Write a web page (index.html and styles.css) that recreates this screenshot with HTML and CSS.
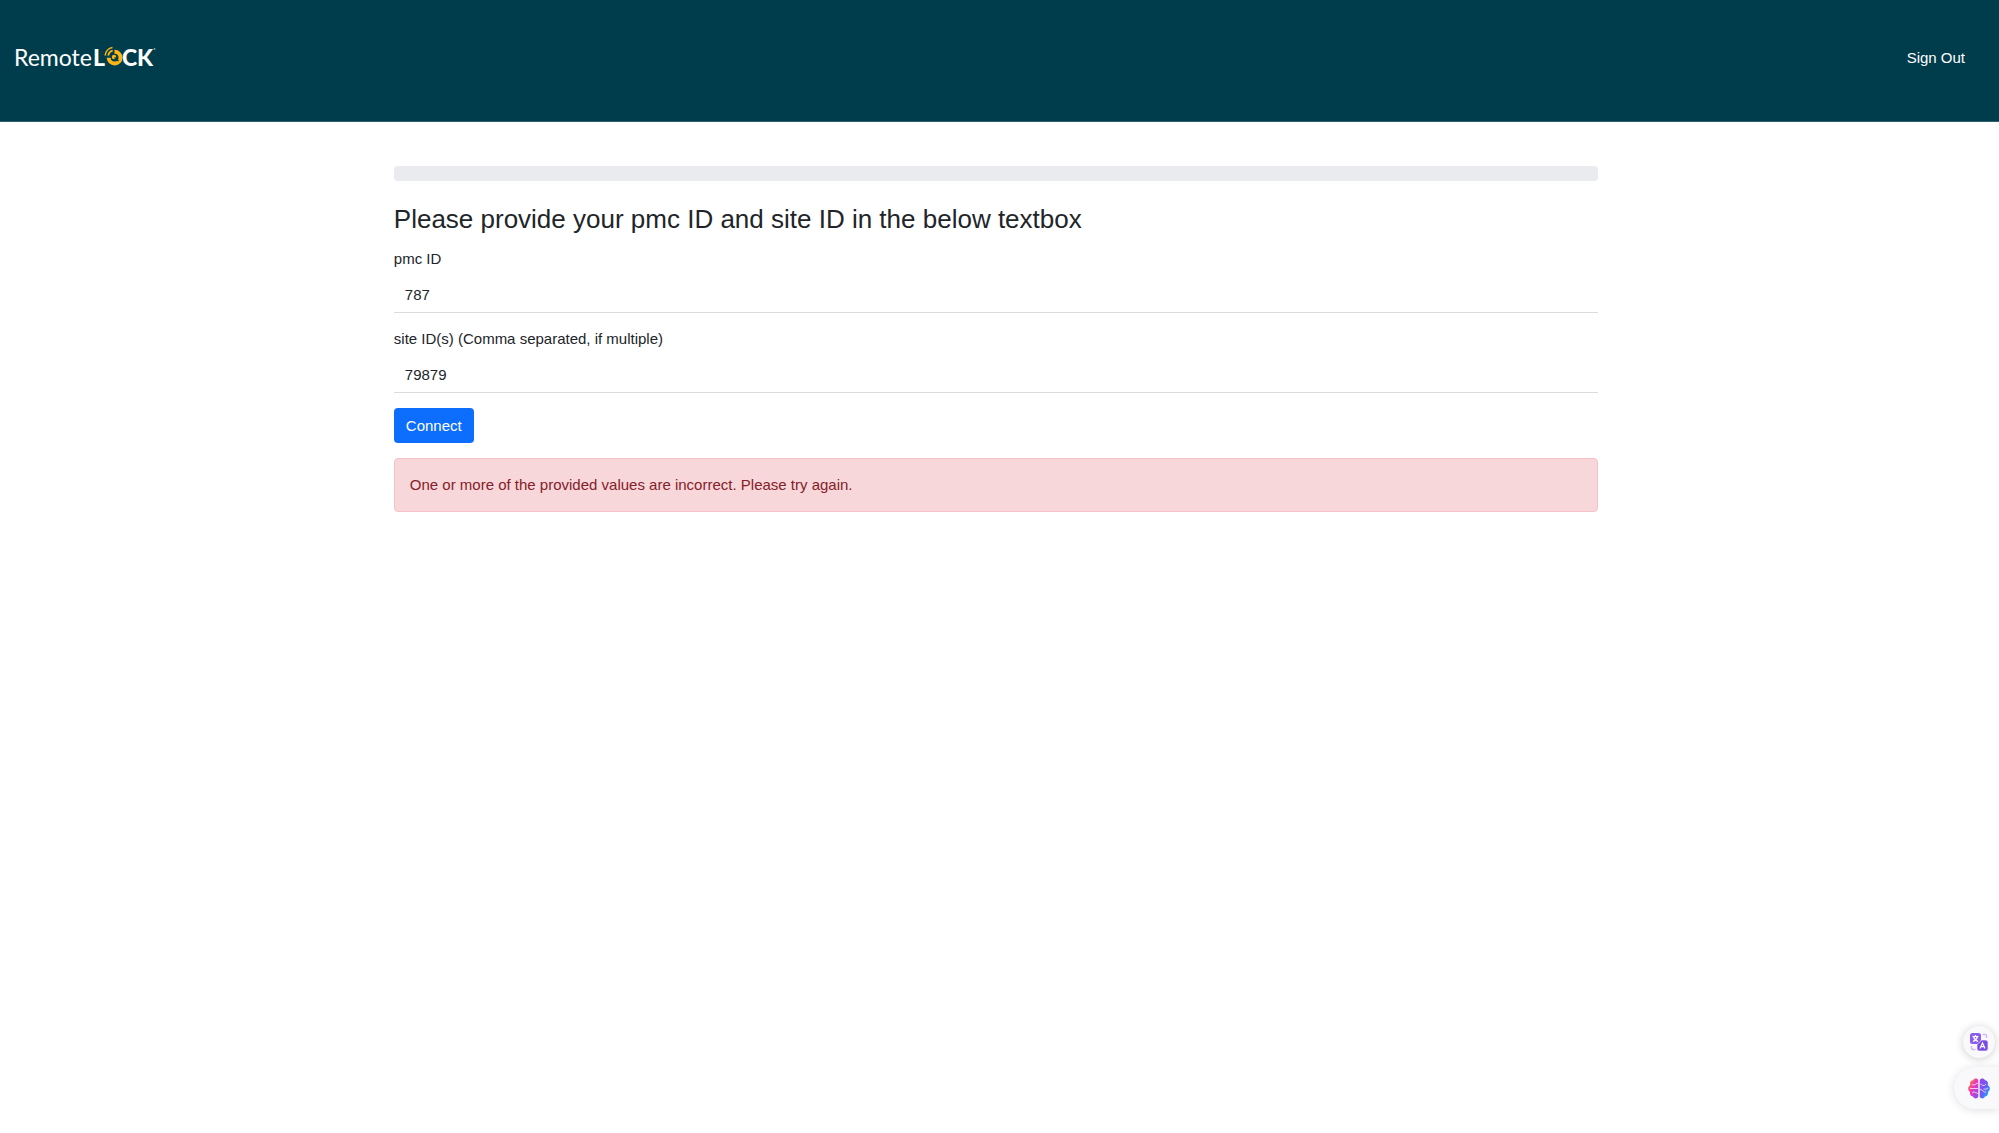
FILE: index.html
```html
<!DOCTYPE html>
<html lang="en">
<head>
<meta charset="utf-8">
<title>RemoteLock</title>
<link rel="stylesheet" href="styles.css">
</head>
<body>
<header class="topbar">
  <a class="logo" href="#">
    <span class="logo-light">Remote</span>
    <span class="logo-bold">L</span>
    <svg class="logo-ring" viewBox="0 0 19 20" width="19" height="20" aria-hidden="true">
      <path d="M10.500 5.700A5.900 5.900 0 1 1 4.700 11.800" fill="none" stroke="#fdb515" stroke-width="4"/>
      <path d="M1.200 9.500A8.800 8.800 0 0 1 8.500 1.500M4.300 9.600A5.800 5.800 0 0 1 8.700 4.700" fill="none" stroke="#fdb515" stroke-width="1.700"/>
      <circle cx="10" cy="11" r="2.200" fill="#fdb515"/>
      <path d="M10.500 11.500L14.500 15" stroke="#003d4c" stroke-width="1.300"/>
    </svg>
    <span class="logo-bold">CK</span>
    <svg class="logo-mark" viewBox="0 0 3 3" width="3" height="3" aria-hidden="true"><circle cx="1.500" cy="1" r="1" fill="#7f9ea6"/></svg>
  </a>
  <a class="signout" href="#">Sign Out</a>
</header>
<main class="content">
  <div class="progress" role="progressbar" aria-label="Setup progress" aria-valuenow="0" aria-valuemin="0" aria-valuemax="100"></div>
  <h1 class="title">Please provide your pmc ID and site ID in the below textbox</h1>
  <form class="form">
    <div class="field">
      <label for="pmc">pmc ID</label>
      <input id="pmc" type="text" value="787">
    </div>
    <div class="field">
      <label for="site">site ID(s) (Comma separated, if multiple)</label>
      <input id="site" type="text" value="79879">
    </div>
    <button class="connect" type="button">Connect</button>
    <div class="alert" role="alert">One or more of the provided values are incorrect. Please try again.</div>
  </form>
</main>
<aside class="widgets">
  <button class="widget-round" type="button" aria-label="Translate">
    <svg viewBox="0 0 18 18" width="18" height="18" aria-hidden="true">
      <rect x="0" y="0" width="11" height="11" rx="2.500" fill="#8b5cf0"/>
      <path d="M7 11.500L11 8V7h4.500A2.500 2.500 0 0 1 18 9.500v6A2.500 2.500 0 0 1 15.500 18h-6A2.500 2.500 0 0 1 7 15.500z" fill="#7c4be0" stroke="#f9f9fb" stroke-width=".6"/>
      <path d="M2.500 3.500h6M5.500 2v1.500M3.500 3.500q1 3.500 4.500 5M7.500 3.500q-1 3.500-4.500 5" fill="none" stroke="#fff" stroke-width="1.200"/>
      <path d="M10 15.500l2.500-5.500 2.500 5.500M11 13.700h3" fill="none" stroke="#fff" stroke-width="1.200"/>
      <path d="M12.500 1.500H15A1.500 1.500 0 0 1 16.500 3v2M1.500 13v2A1.500 1.500 0 0 0 3 16.500h2.500" fill="none" stroke="#cdb8f8" stroke-width="1.400"/>
    </svg>
  </button>
  <button class="widget-tab" type="button" aria-label="Assistant">
    <svg viewBox="0 0 22 21" width="22" height="21" aria-hidden="true">
      <defs>
        <linearGradient id="warm" x1="0" y1="0" x2="1" y2="1"><stop offset=".1" stop-color="#ff8a1f"/><stop offset=".45" stop-color="#f037b8"/><stop offset="1" stop-color="#7a52f5"/></linearGradient>
        <linearGradient id="cool" x1="0" y1="0" x2="1" y2="1"><stop offset="0" stop-color="#a044e8"/><stop offset=".5" stop-color="#6a5cf5"/><stop offset=".9" stop-color="#12b5ff"/></linearGradient>
      </defs>
      <path d="M10.300 2.500C9.500 0 6 0 5 2.300 2.500 2.500 1.500 5 2.300 7-.5 8.500-.5 12.500 2 14c-.5 2.500 1 4.300 3 4.500 1 2.600 4.500 2.600 5.300 0z" fill="url(#warm)"/>
      <path d="M11.700 2.500C12.500 0 16 0 17 2.300c2.500.2 3.500 2.700 2.700 4.700 2.800 1.500 2.800 5.500.3 7 .5 2.500-1 4.300-3 4.500-1 2.600-4.500 2.600-5.300 0z" fill="url(#cool)"/>
      <path d="M4 6.500q2 1.500 4-.5l2-1M2 10.500h8M4 15q1.500-2 3.500-.5l2.500 1M18 6q-1 2-3 1.500l-2.500-1.500M20 10q-2 2-4.500 1M12 11.500q2 0 3 1.500t3 1" fill="none" stroke="#f9e8ff" stroke-width=".8"/>
    </svg>
  </button>
</aside>
</body>
</html>
```
FILE: styles.css
```css
* { box-sizing: border-box; }

body {
  margin: 0;
  background: #fff;
  color: #212529;
  font: 15px/22px "Liberation Sans", Arial, sans-serif;
}

.topbar {
  display: flex;
  align-items: center;
  justify-content: space-between;
  padding: 45px 34px 52px 14px;
  background: #003d4c;
  border-bottom: 1px solid #2f606d;
}

.logo {
  display: flex;
  align-items: center;
  height: 22px;
  color: #fff;
  text-decoration: none;
  font: 23px/22px Lato, sans-serif;
}
.logo-bold { font-weight: 900; }
.logo-light + .logo-bold { margin-left: 1px; }
.logo-ring { margin: -3px -1px 0; }
.logo-mark { align-self: flex-start; margin-top: 2px; }

.signout {
  padding-top: 2px;
  color: #fff;
  text-decoration: none;
}

.content {
  width: 60.25%;
  margin: 44px 20% 0 19.7%;
}

.progress {
  height: 15px;
  border-radius: 4px;
  background: #e9ebef;
}

.title {
  margin: 22px 0 13px;
  font-size: 26px;
  line-height: 32px;
  font-weight: 400;
}

.form {
  display: flex;
  flex-direction: column;
  align-items: flex-start;
  gap: 15px;
}

.field { width: 100%; }
.field label { display: block; margin-bottom: 7px; }
.field input {
  display: block;
  width: 100%;
  height: 36px;
  padding: 0 11px;
  border: 0;
  border-bottom: 1px solid #dcdcdc;
  background: transparent;
  color: inherit;
  font: inherit;
}

.connect {
  height: 35px;
  padding: 0 12px;
  border: 0;
  border-radius: 4px;
  background: #0d6efd;
  color: #fff;
  font: inherit;
}

.alert {
  width: 100%;
  padding: 15px;
  border: 1px solid #f5c2c7;
  border-radius: 4px;
  background: #f8d7da;
  color: #842029;
}

.widgets {
  position: fixed;
  right: 0;
  bottom: 24px;
  display: flex;
  flex-direction: column;
  align-items: flex-end;
  gap: 9px;
}
.widgets button {
  display: flex;
  align-items: center;
  border: 0;
  background: #f9f9fb;
}
.widgets .widget-round {
  justify-content: center;
  width: 32px;
  height: 32px;
  margin-right: 4px;
  padding: 0;
  border-radius: 50%;
  box-shadow: 0 1px 8px #0003;
}
.widgets .widget-tab {
  width: 45px;
  height: 42px;
  padding: 0 0 0 14px;
  border-radius: 21px 0 0 21px;
  box-shadow: 0 1px 10px #0002;
}
```
